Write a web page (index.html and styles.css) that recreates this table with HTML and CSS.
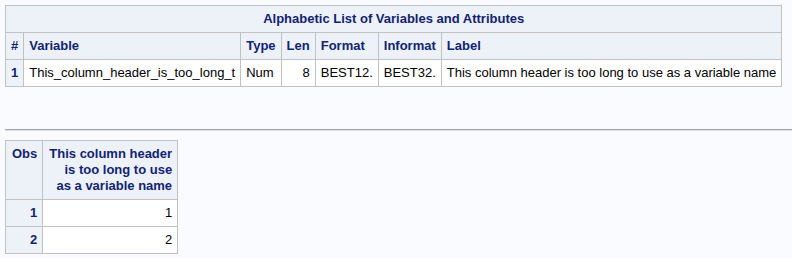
FILE: index.html
```html
<!DOCTYPE html>
<html lang="en">
  <head>
    <meta charset="UTF-8" />
    <title>SAS Output</title>
    <link rel="stylesheet" href="styles.css">
  </head>
  <body>
    <div class="output">
      <table class="table">
        <thead>
          <tr>
            <th class="title" colspan="7">Alphabetic List of Variables and Attributes</th>
          </tr>
          <tr>
            <th class="r">#</th>
            <th>Variable</th>
            <th>Type</th>
            <th class="r">Len</th>
            <th>Format</th>
            <th>Informat</th>
            <th>Label</th>
          </tr>
        </thead>
        <tbody>
          <tr>
            <th class="r">1</th>
            <td>This_column_header_is_too_long_t</td>
            <td>Num</td>
            <td class="r">8</td>
            <td>BEST12.</td>
            <td>BEST32.</td>
            <td>This column header is too long to use as a variable name</td>
          </tr>
        </tbody>
      </table>
    </div>

    <hr class="pagebreak" />

    <div class="output">
      <table class="table print">
        <thead>
          <tr>
            <th class="r">Obs</th>
            <th class="r">This column header<br />is too long to use<br />as a variable name</th>
          </tr>
        </thead>
        <tbody>
          <tr>
            <th class="r">1</th>
            <td class="r">1</td>
          </tr>
          <tr>
            <th class="r">2</th>
            <td class="r">2</td>
          </tr>
        </tbody>
      </table>
    </div>
  </body>
</html>
```

FILE: styles.css
```css
body {
  margin: 0;
  padding: 5px 0 0 5px;
  background-color: #fafbfe;
  font-family: "Liberation Sans", Arial, sans-serif;
  font-size: 13px;
  color: #000;
}
.output {
  display: flex;
}
.table {
  border-collapse: collapse;
  border: 1px solid #c1c1c1;
}
.table th,
.table td {
  border: 1px solid #c1c1c1;
  padding: 5px;
  line-height: 16px;
  text-align: left;
  vertical-align: top;
  white-space: nowrap;
}
.table th {
  background-color: #edf2f9;
  color: #112277;
  font-weight: bold;
}
.table td {
  background-color: #fff;
}
.table .title {
  text-align: center;
}
.table .r {
  text-align: right;
}
/* proc print cells are a little wider on the left */
.print th,
.print td {
  padding: 5px 5px 5px 6px;
}
.pagebreak {
  margin: 42px 0 9px 0;
  height: 0;
  border: none;
  border-top: 1px solid #a3a3a3;
  border-bottom: 1px solid #e2e2e2;
}
```
